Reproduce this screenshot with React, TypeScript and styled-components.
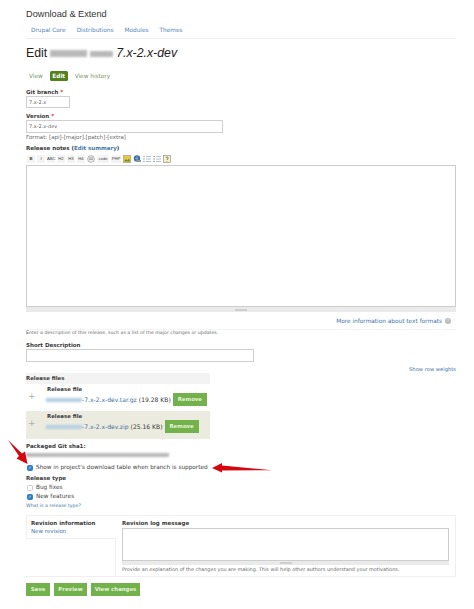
// App.tsx

import React from 'react'
import styled, { createGlobalStyle } from 'styled-components'

const GlobalStyle = createGlobalStyle`
  html, body {
    margin: 0;
    padding: 0;
    background: #fff;
  }
  body {
    font-family: 'DejaVu Sans', Verdana, sans-serif;
    font-size: 6px;
    color: #3a3a3a;
  }
`

const Page = styled.div`
  position: relative;
  width: 474px;
  height: 609px;
  overflow: hidden;
  box-sizing: border-box;
  padding: 9px 18px 0 26px;
`

const SiteTitle = styled.div`
  font-family: 'Liberation Sans', Arial, sans-serif;
  font-size: 9.2px;
  line-height: 11px;
  color: #333;
`

const SiteNav = styled.nav`
  display: flex;
  gap: 11px;
  padding: 7px 0 0 5px;
  height: 11px;
  border-bottom: 1px solid #eee;
`

const SiteNavLink = styled.a`
  font-size: 5.8px;
  line-height: 7px;
  color: #5286b8;
`

const PageTitle = styled.h1`
  display: flex;
  align-items: center;
  gap: 3px;
  margin: 7px 0 0;
  font-family: 'Liberation Sans', Arial, sans-serif;
  font-size: 12.3px;
  line-height: 15px;
  font-weight: 400;
  color: #222;
`

const Version = styled.em`
  font-style: italic;
`

const Redacted = styled.span<{ $w: number; $h?: number; $tone?: string }>`
  display: inline-block;
  width: ${p => p.$w}px;
  height: ${p => p.$h ?? 6}px;
  background: ${p => p.$tone ?? '#b9b9b9'};
  filter: blur(1.2px);
`

const ShaValue = styled(Redacted)`
  display: block;
  margin-top: 3px;
`

const LocalTabs = styled.div`
  display: flex;
  align-items: center;
  gap: 7px;
  margin: 10px 0 0 3px;
  height: 10px;
`

const LocalTab = styled.a<{ $active?: boolean }>`
  font-size: 5.8px;
  line-height: 10px;
  padding: 0 ${p => (p.$active ? '2.5px' : '0')};
  border-radius: 1.5px;
  font-weight: ${p => (p.$active ? 700 : 400)};
  color: ${p => (p.$active ? '#fff' : '#7a9468')};
  background: ${p => (p.$active ? '#55801e' : 'transparent')};
`

const Field = styled.div<{ $top: number }>`
  margin-top: ${p => p.$top}px;
`

const Label = styled.label`
  display: block;
  font-size: 5.5px;
  line-height: 7px;
  font-weight: 700;
  color: #3a3a3a;
`

const Req = styled.span`
  color: #d0342c;
`

const TextInput = styled.div<{ $w: number; $h: number }>`
  box-sizing: border-box;
  width: ${p => p.$w}px;
  height: ${p => p.$h}px;
  border: 1px solid #cfcfcf;
  padding: 0 2px;
  font-size: 5px;
  line-height: ${p => p.$h - 2}px;
  color: #666;
`

const Hint = styled.div<{ $top?: number; $size?: number }>`
  margin-top: ${p => p.$top ?? 0}px;
  font-size: ${p => p.$size ?? 4.7}px;
  line-height: 6px;
  color: #6a6a6a;
  white-space: nowrap;
`

const Link = styled.a`
  color: #4277ad;
`

const Toolbar = styled.div`
  display: flex;
  align-items: center;
  gap: 2px;
  height: 12px;
  padding: 1px 0 0 1px;
`

const ToolButton = styled.span<{ $w?: number; $bold?: boolean; $italic?: boolean }>`
  font-family: 'Liberation Sans', Arial, sans-serif;
  font-size: 4.2px;
  line-height: 8px;
  width: ${p => p.$w ?? 8}px;
  text-align: center;
  white-space: nowrap;
  color: #444;
  background: #f4f4f4;
  font-weight: ${p => (p.$bold ? 700 : 400)};
  font-style: ${p => (p.$italic ? 'italic' : 'normal')};
`

const Editor = styled.div`
  box-sizing: border-box;
  width: 430px;
  height: 142px;
  border: 1px solid #cdcdcd;
`

const Grip = styled.div<{ $h?: number }>`
  display: flex;
  justify-content: center;
  align-items: center;
  height: ${p => p.$h ?? 5}px;
  background: #eaeaea;
  &::before {
    content: '';
    width: 12px;
    height: 2px;
    background: #cfcfcf;
  }
`

const FormatBar = styled.div`
  display: flex;
  justify-content: flex-end;
  align-items: center;
  gap: 3px;
  height: 17px;
  padding-right: 5px;
  font-size: 5.8px;
  border-bottom: 1px solid #f4f4f4;
`

const HelpDot = styled.span`
  display: inline-block;
  width: 6px;
  height: 6px;
  border-radius: 50%;
  background: #bbb;
  color: #fff;
  font-size: 4px;
  line-height: 6px;
  text-align: center;
`

const RightLink = styled.div`
  font-size: 5.2px;
  line-height: 7px;
  text-align: right;
  margin-top: 4px;
`

const FilesTable = styled.div`
  width: 184px;
`

const FilesHead = styled.div`
  height: 11px;
  box-sizing: border-box;
  background: #f3f3f3;
  font-size: 5.4px;
  line-height: 11px;
  font-weight: 700;
`

const FileRow = styled.div<{ $alt?: boolean }>`
  display: flex;
  align-items: flex-start;
  box-sizing: border-box;
  padding-top: 2px;
  height: ${p => (p.$alt ? 28 : 27)}px;
  background: ${p => (p.$alt ? '#ecebdf' : '#fff')};
`

const DragHandle = styled.span`
  width: 20px;
  padding: 5px 0 0 2px;
  box-sizing: border-box;
  font-size: 9px;
  line-height: 10px;
  color: #b0b0b0;
`

const FileTitle = styled.div`
  padding-left: 1px;
  font-size: 5.4px;
  line-height: 7px;
  font-weight: 700;
`

const FileLine = styled.div`
  display: flex;
  align-items: center;
  gap: 2px;
  font-size: 6.05px;
  line-height: 13px;
  white-space: nowrap;
`

const FileName = styled.span`
  display: inline-flex;
  align-items: center;
  color: #3e6f9f;
`

const GreenButton = styled.button`
  border: 0;
  margin: 0;
  padding: 0;
  font-family: 'DejaVu Sans', Verdana, sans-serif;
  font-size: 5.4px;
  font-weight: 700;
  color: #e8f3dc;
  background: #72b14b;
  height: 13px;
  line-height: 13px;
`

const RemoveButton = styled(GreenButton)`
  width: 34px;
`

const CheckRow = styled.label<{ $top?: number }>`
  display: flex;
  align-items: center;
  gap: 3px;
  margin-top: ${p => p.$top ?? 0}px;
  height: 9px;
  font-size: 5.75px;
  line-height: 9px;
  color: #444;
`

const CheckBox = styled.span<{ $on?: boolean }>`
  box-sizing: border-box;
  width: 6px;
  height: 6px;
  margin-left: 1px;
  border-radius: 1.5px;
  border: 1px solid ${p => (p.$on ? '#2f7fc9' : '#ccc')};
  background: ${p => (p.$on ? '#2f7fc9' : '#fff')};
  color: #fff;
  font-size: 4px;
  line-height: 4px;
  text-align: center;
`

const Revision = styled.div`
  display: flex;
  box-sizing: border-box;
  width: 430px;
  height: 62px;
  margin-top: 6px;
  border: 1px solid #efefef;
  border-left: 0;
`

const RevisionSide = styled.div`
  box-sizing: border-box;
  width: 89px;
  height: 23px;
  padding: 3px 0 0 4px;
  border-left: 1px solid #efefef;
  border-bottom: 1px solid #efefef;
  font-size: 5.5px;
  line-height: 8px;
`

const SideTitle = styled.div`
  font-weight: 700;
`

const RevisionMain = styled.div`
  flex: 1;
  min-width: 0;
  padding: 4px 6px 0 7px;
  background: linear-gradient(#efefef, #efefef) 0 22px / 1px 100% no-repeat;
`

const LogBox = styled.div`
  box-sizing: border-box;
  height: 33px;
  margin-top: 1px;
  border: 1px solid #cdcdcd;
`

const Actions = styled.div`
  display: flex;
  gap: 4px;
  margin-top: 6px;
`

const ActionButton = styled(GreenButton)<{ $w: number }>`
  width: ${p => p.$w}px;
`

const ArrowLayer = styled.svg`
  position: absolute;
  left: 0;
  top: 0;
  pointer-events: none;
`

const ImageIcon = () => (
  <svg width="8" height="8" viewBox="0 0 8 8">
    <rect width="8" height="7" y="0.5" fill="#e8c64a" stroke="#888" strokeWidth="0.5" />
    <path d="M1 6.5 3 4l1.5 1.5L6 3.5l1 3z" fill="#5c8f3a" />
  </svg>
)

const GlobeIcon = () => (
  <svg width="8" height="8" viewBox="0 0 8 8">
    <circle cx="4" cy="3.5" r="3.2" fill="#3f6f9e" />
    <path d="M2 3.5h3M4 1v5" stroke="#a9c7e0" strokeWidth="0.6" />
    <rect x="4" y="5" width="4" height="2" fill="#999" />
  </svg>
)

const NumberedListIcon = () => (
  <svg width="8" height="8" viewBox="0 0 8 8" fill="none" stroke="#8aa6c0" strokeWidth="0.7">
    <path d="M3 1.5h5M3 4h5M3 6.5h5" />
    <path d="M1 1v1.2M1 3.4v1.2M1 5.9v1.2" stroke="#555" />
  </svg>
)

const BulletListIcon = () => (
  <svg width="8" height="8" viewBox="0 0 8 8" fill="none" stroke="#8aa6c0" strokeWidth="0.7">
    <path d="M3 1.5h5M3 4h5M3 6.5h5" />
    <path d="M.6 1.500h1M.6 4h1M.6 6.500h1" stroke="#555" strokeWidth="1" />
  </svg>
)

const HelpIcon = () => (
  <svg width="8" height="8" viewBox="0 0 8 8">
    <rect x="0.5" y="0.5" width="7" height="7" fill="#f4f0c8" stroke="#888" strokeWidth="0.6" />
    <path d="M3 3c0-1.4 2.2-1.4 2.2 0C5.200 4 4 4 4 5M4 6v.6" fill="none" stroke="#555" strokeWidth="0.7" />
  </svg>
)

const QuoteIcon = () => (
  <svg width="8" height="8" viewBox="0 0 8 8">
    <circle cx="4" cy="4" r="3.4" fill="#eee" stroke="#888" strokeWidth="0.6" />
    <path d="M2 3h4M2 4.400h4" stroke="#777" strokeWidth="0.6" />
  </svg>
)

const App: React.FC = () => {
  return (
    <>
      <GlobalStyle />
      <Page>
        <SiteTitle>Download &amp; Extend</SiteTitle>
        <SiteNav>
          <SiteNavLink>Drupal Core</SiteNavLink>
          <SiteNavLink>Distributions</SiteNavLink>
          <SiteNavLink>Modules</SiteNavLink>
          <SiteNavLink>Themes</SiteNavLink>
        </SiteNav>

        <PageTitle>
          Edit <Redacted $w={37} $h={7} /><Redacted $w={23} $h={6} />
          <Version>7.x-2.x-dev</Version>
        </PageTitle>

        <LocalTabs>
          <LocalTab>View</LocalTab>
          <LocalTab $active>Edit</LocalTab>
          <LocalTab>View history</LocalTab>
        </LocalTabs>

        <Field $top={8}>
          <Label>Git branch <Req>*</Req></Label>
          <TextInput $w={44} $h={12}>7.x-2.x</TextInput>
        </Field>

        <Field $top={5}>
          <Label>Version <Req>*</Req></Label>
          <TextInput $w={197} $h={13}>7.x-2.x-dev</TextInput>
          <Hint $top={1} $size={5.5}>Format: [api]-[major].[patch]-[extra]</Hint>
        </Field>

        <Field $top={5}>
          <Label>Release notes (<Link>Edit summary</Link>)</Label>
          <Toolbar>
            <ToolButton $bold>B</ToolButton>
            <ToolButton $italic>I</ToolButton>
            <ToolButton>ABC</ToolButton>
            <ToolButton>H2</ToolButton>
            <ToolButton>H3</ToolButton>
            <ToolButton>H4</ToolButton>
            <QuoteIcon />
            <ToolButton $w={12}>code</ToolButton>
            <ToolButton $w={10}>PHP</ToolButton>
            <ImageIcon />
            <GlobeIcon />
            <NumberedListIcon />
            <BulletListIcon />
            <HelpIcon />
          </Toolbar>
          <Editor />
          <Grip />
          <FormatBar>
            <Link>More information about text formats</Link>
            <HelpDot>?</HelpDot>
          </FormatBar>
          <Hint>Enter a description of this release, such as a list of the major changes or updates.</Hint>
        </Field>

        <Field $top={6}>
          <Label>Short Description</Label>
          <TextInput $w={228} $h={13} />
        </Field>

        <RightLink><Link>Show row weights</Link></RightLink>

        <FilesTable>
          <FilesHead>Release files</FilesHead>
          <FileRow>
            <DragHandle>+</DragHandle>
            <div>
              <FileTitle>Release file</FileTitle>
              <FileLine>
                <FileName><Redacted $w={36} $h={4} $tone="#b4cfe4" />-7.x-2.x-dev.tar.gz</FileName>
                (19.28 KB)
                <RemoveButton>Remove</RemoveButton>
              </FileLine>
            </div>
          </FileRow>
          <FileRow $alt>
            <DragHandle>+</DragHandle>
            <div>
              <FileTitle>Release file</FileTitle>
              <FileLine>
                <FileName><Redacted $w={36} $h={4} $tone="#b4cfe4" />-7.x-2.x-dev.zip</FileName>
                (25.16 KB)
                <RemoveButton>Remove</RemoveButton>
              </FileLine>
            </div>
          </FileRow>
        </FilesTable>

        <Field $top={4}>
          <Label>Packaged Git sha1:</Label>
          <ShaValue $w={143} $h={4} />
        </Field>

        <CheckRow $top={6}>
          <CheckBox $on>✓</CheckBox>
          Show in project's download table when branch is supported
        </CheckRow>

        <Field $top={3}>
          <Label>Release type</Label>
          <CheckRow $top={1}>
            <CheckBox />
            Bug fixes
          </CheckRow>
          <CheckRow>
            <CheckBox $on>✓</CheckBox>
            New features
          </CheckRow>
          <Hint $top={2}><Link>What is a release type?</Link></Hint>
        </Field>

        <Revision>
          <RevisionSide>
            <SideTitle>Revision information</SideTitle>
            <Link>New revision</Link>
          </RevisionSide>
          <RevisionMain>
            <Label>Revision log message</Label>
            <LogBox />
            <Grip $h={4} />
            <Hint $top={1} $size={4.9}>Provide an explanation of the changes you are making. This will help other authors understand your motivations.</Hint>
          </RevisionMain>
        </Revision>

        <Actions>
          <ActionButton $w={24}>Save</ActionButton>
          <ActionButton $w={33}>Preview</ActionButton>
          <ActionButton $w={49}>View changes</ActionButton>
        </Actions>

        <ArrowLayer width="474" height="609" viewBox="0 0 474 609">
          <path d="M272 470.300 L222 465.500 L222 463 L212 468 L222 472.500 L222 470.500 Z" fill="#d3070f" />
          <path d="M8 440 L22 453.500 L25 451.500 L27.500 464 L16.500 458.500 L19 456 Z" fill="#d3070f" />
        </ArrowLayer>
      </Page>
    </>
  )
}

export default App
